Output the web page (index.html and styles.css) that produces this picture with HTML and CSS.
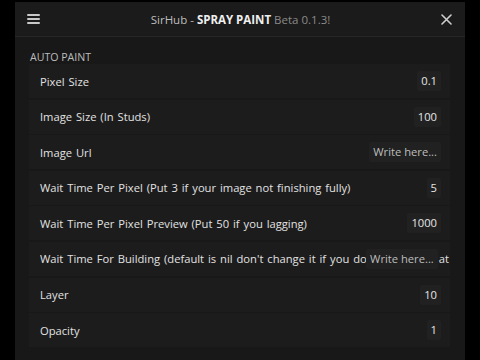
FILE: index.html
```html
<!DOCTYPE html>
<html>
<head>
<meta charset="utf-8">
<link rel="stylesheet" href="styles.css">
</head>
<body>
<div class="stage">
  <div class="window">
    <div class="titlebar">
      <svg class="menu" width="13" height="10" viewBox="0 0 13 10"><rect x="0" y="0" width="13" height="2" rx="1" fill="#c8c8c8"/><rect x="0" y="4" width="13" height="2" rx="1" fill="#c8c8c8"/><rect x="0" y="8" width="13" height="2" rx="1" fill="#c8c8c8"/></svg>
      <div class="title"><span class="t-light">SirHub - </span><span class="t-bold">SPRAY PAINT</span> <span class="t-dim">Beta 0.1.3!</span></div>
      <svg class="close" width="11" height="11" viewBox="0 0 11 11"><path d="M1 1L10 10M10 1L1 10" stroke="#cfcfcf" stroke-width="1.6" stroke-linecap="round"/></svg>
    </div>
    <div class="content">
      <div class="section">AUTO PAINT</div>
      <div class="rows">
        <div class="row"><span class="label">Pixel Size</span><span class="box">0.1</span></div>
        <div class="row"><span class="label">Image Size (In Studs)</span><span class="box">100</span></div>
        <div class="row"><span class="label">Image Url</span><span class="box ph">Write here...</span></div>
        <div class="row"><span class="label">Wait Time Per Pixel (Put 3 if your image not finishing fully)</span><span class="box">5</span></div>
        <div class="row"><span class="label">Wait Time Per Pixel Preview (Put 50 if you lagging)</span><span class="box">1000</span></div>
        <div class="row clipped"><span class="label cut">Wait Time For Building (default is nil don't change it if you do</span><span class="box ph">Write here...</span><span class="tail">at</span></div>
        <div class="row"><span class="label">Layer</span><span class="box">10</span></div>
        <div class="row"><span class="label">Opacity</span><span class="box">1</span></div>
      </div>
    </div>
  </div>
</div>
</body>
</html>
```
FILE: styles.css
```css
html, body {
  margin: 0;
  padding: 0;
  background: #000;
  width: 480px;
  height: 360px;
  overflow: hidden;
  font-family: "Open Sans", "Liberation Sans", sans-serif;
}
.stage {
  display: flex;
  justify-content: flex-start;
  padding: 2px 0 0 15px;
  height: 358px;
}
.window {
  width: 450px;
  height: 358px;
  background: #181818;
  display: flex;
  flex-direction: column;
}
.titlebar {
  height: 34px;
  display: flex;
  align-items: center;
  justify-content: space-between;
  padding: 0 13px 0 12px;
  background: #1b1b1b;
  border-bottom: 1px solid #262626;
}
.title {
  font-size: 11.5px;
  color: #bdbdbd;
  white-space: nowrap;
}
.t-light { color: #bdbdbd; }
.t-bold { color: #efefef; font-weight: 700; }
.t-dim { color: #8a8a8a; }
.content {
  padding: 13px 15px 0 14px;
}
.section {
  font-size: 10.6px;
  color: #bcbcbc;
  height: 14px;
  line-height: 14px;
  padding-left: 1px;
}
.rows {
  display: flex;
  flex-direction: column;
  gap: 1.6px;
}
.row {
  height: 34px;
  background: #1c1c1c;
  display: flex;
  align-items: center;
  justify-content: space-between;
  padding: 0 9px 0 11px;
  overflow: hidden;
}
.label {
  font-size: 11.2px;
  word-spacing: 1px;
  color: #e2e2e2;
  white-space: nowrap;
}
.box {
  flex: none;
  background: #212121;
  color: #e6e6e6;
  font-size: 11.2px;
  height: 20px;
  line-height: 20px;
  padding: 0 4px;
  border-radius: 2px;
}
.ph { color: #bdbdbd; }
.clipped {
  padding-right: 0;
}
.cut {
  flex: 1 1 auto;
  min-width: 0;
  overflow: hidden;
}
.tail {
  flex: none;
  margin-left: 1px;
  padding-right: 1px;
  font-size: 11.2px;
  color: #e2e2e2;
  white-space: nowrap;
}
```
